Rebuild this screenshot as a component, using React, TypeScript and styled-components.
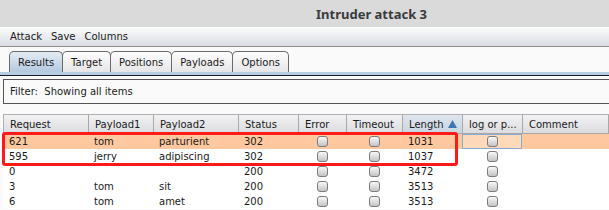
import React from "react";
import styled, { createGlobalStyle } from "styled-components";

const GlobalStyle = createGlobalStyle`
  html, body {
    margin: 0;
    padding: 0;
    background: #fafafa;
  }
  body {
    font-family: "DejaVu Sans", sans-serif;
    font-size: 10px;
    color: #1a1a1a;
  }
`;

const Window = styled.div`
  width: 609px;
  height: 210px;
  overflow: hidden;
  background: #fafafa;
`;

const TitleBar = styled.div`
  height: 27px;
  background: #dadada;
  display: flex;
  align-items: center;
  padding-left: 316px;
  font-family: "Noto Sans", sans-serif;
  font-weight: 700;
  font-size: 13px;
  color: #3a3a3a;
`;

const MenuBar = styled.div`
  height: 19px;
  display: flex;
  align-items: center;
  gap: 9px;
  padding-left: 10px;
  background: linear-gradient(#fbfcfc, #d9dde3);
  border-bottom: 1px solid #8c8c8c;
`;

const MenuItem = styled.span`
  font-size: 10px;
`;

const TabStrip = styled.div`
  height: 25px;
  display: flex;
  align-items: flex-end;
  padding-left: 9px;
  background: #fafafa;
  border-bottom: 3px solid #b9cde2;
  box-shadow: 0 1px 0 #1b1b2a;
`;

const Tab = styled.div<{ $active?: boolean }>`
  height: 20px;
  padding: 0 8px;
  display: flex;
  align-items: center;
  border: 1px solid #6a6a6a;
  border-bottom: none;
  border-radius: 5px 5px 0 0;
  margin-right: -1px;
  background: ${(p) =>
    p.$active
      ? "linear-gradient(#e3ecf5, #b3c9df)"
      : "linear-gradient(#fdfdfd, #e6e6e8)"};
`;

const Content = styled.div`
  padding: 4px 0 0 3px;
`;

const FilterBox = styled.div`
  height: 23px;
  border: 1px solid #555;
  border-right: none;
  display: flex;
  align-items: center;
  padding-left: 6px;
  background: #fafafa;
`;

const TableWrap = styled.div`
  position: relative;
  margin-top: 10px;
`;

const columns = "85px 65px 85px 60px 48px 56px 60px 60px 1fr";

const HeaderRow = styled.div`
  display: grid;
  grid-template-columns: ${columns};
  height: 19px;
  border-top: 1px solid #b0b0b0;
  border-left: 1px solid #b0b0b0;
`;

const HeaderCell = styled.div<{ $sorted?: boolean }>`
  display: flex;
  align-items: center;
  justify-content: space-between;
  padding: 0 5px 0 6px;
  border-right: 1px solid #a8a8a8;
  border-bottom: 1px solid #a8a8a8;
  background: ${(p) =>
    p.$sorted
      ? "linear-gradient(#dfe6ee, #c8d4e2)"
      : "linear-gradient(#f2f2f4, #dcdce0)"};
  white-space: nowrap;
  overflow: hidden;
`;

const Row = styled.div<{ $selected?: boolean }>`
  display: grid;
  grid-template-columns: ${columns};
  height: 15px;
  background: ${(p) => (p.$selected ? "#ffc89e" : "#ffffff")};
`;

const Cell = styled.div<{ $center?: boolean; $focus?: boolean }>`
  display: flex;
  align-items: center;
  justify-content: ${(p) => (p.$center ? "center" : "flex-start")};
  padding-left: ${(p) => (p.$center ? "0" : "6px")};
  white-space: nowrap;
  ${(p) =>
    p.$focus &&
    `
    border: 1px solid #86acd6;
    background: #ffd9b8;
  `}
`;

const Check = styled.span`
  width: 11px;
  height: 11px;
  box-sizing: border-box;
  border: 1px solid #7c7c7c;
  border-radius: 3px;
  background: linear-gradient(#f8f8f8, #c4c4c8);
`;

const Highlight = styled.div`
  position: absolute;
  left: -1px;
  top: 18px;
  width: 450px;
  height: 28px;
  border: 3px solid #ff1a1a;
  border-radius: 3px;
  pointer-events: none;
`;

const SortArrow = () => (
  <svg width="9" height="8" viewBox="0 0 9 8">
    <polygon points="4.5,0 9,8 0,8" fill="#3f76b8" />
  </svg>
);

type RowData = {
  request: string;
  p1: string;
  p2: string;
  status: string;
  length: string;
};

const rows: RowData[] = [
  { request: "621", p1: "tom", p2: "parturient", status: "302", length: "1031" },
  { request: "595", p1: "jerry", p2: "adipiscing", status: "302", length: "1037" },
  { request: "0", p1: "", p2: "", status: "200", length: "3472" },
  { request: "3", p1: "tom", p2: "sit", status: "200", length: "3513" },
  { request: "6", p1: "tom", p2: "amet", status: "200", length: "3513" },
];

export default function App() {
  return (
    <Window>
      <GlobalStyle />
      <TitleBar>Intruder attack 3</TitleBar>
      <MenuBar>
        <MenuItem>Attack</MenuItem>
        <MenuItem>Save</MenuItem>
        <MenuItem>Columns</MenuItem>
      </MenuBar>
      <TabStrip>
        <Tab $active>Results</Tab>
        <Tab>Target</Tab>
        <Tab>Positions</Tab>
        <Tab>Payloads</Tab>
        <Tab>Options</Tab>
      </TabStrip>
      <Content>
        <FilterBox>Filter:&nbsp; Showing all items</FilterBox>
        <TableWrap>
          <HeaderRow>
            <HeaderCell>Request</HeaderCell>
            <HeaderCell>Payload1</HeaderCell>
            <HeaderCell>Payload2</HeaderCell>
            <HeaderCell>Status</HeaderCell>
            <HeaderCell>Error</HeaderCell>
            <HeaderCell>Timeout</HeaderCell>
            <HeaderCell $sorted>
              Length <SortArrow />
            </HeaderCell>
            <HeaderCell>log or p...</HeaderCell>
            <HeaderCell>Comment</HeaderCell>
          </HeaderRow>
          {rows.map((r, i) => (
            <Row key={r.request} $selected={i === 0}>
              <Cell>{r.request}</Cell>
              <Cell>{r.p1}</Cell>
              <Cell>{r.p2}</Cell>
              <Cell>{r.status}</Cell>
              <Cell $center>
                <Check />
              </Cell>
              <Cell $center>
                <Check />
              </Cell>
              <Cell>{r.length}</Cell>
              <Cell $center $focus={i === 0}>
                <Check />
              </Cell>
              <Cell />
            </Row>
          ))}
          <Highlight />
        </TableWrap>
      </Content>
    </Window>
  );
}
